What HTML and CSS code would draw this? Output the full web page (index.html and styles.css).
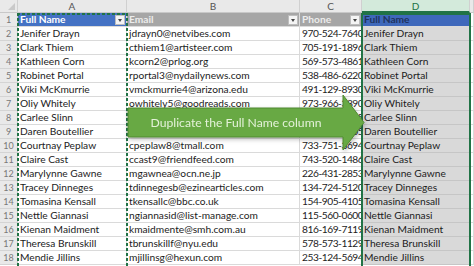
FILE: index.html
```html
<!DOCTYPE html>
<html lang="en">
<head>
    <meta charset="UTF-8">
    <title>Duplicate column</title>
    <link rel="stylesheet" href="styles.css">
</head>
<body>
    <div class="sheet-wrap">
        <div class="sheet">
            <!-- column headers -->
            <div class="col-head corner"></div>
            <div class="col-head">A</div>
            <div class="col-head">B</div>
            <div class="col-head">C</div>
            <div class="col-head active">D</div>
            <div class="col-head"></div>

            <!-- table header row -->
            <div class="row-num">1</div>
            <div class="cell th th-blue">Full Name<span class="filter"></span></div>
            <div class="cell th th-gray">Email<span class="filter"></span></div>
            <div class="cell th th-gray">Phone<span class="filter"></span></div>
            <div class="cell th th-sel">Full Name</div>
            <div class="cell"></div>

            <div class="row-num">2</div><div class="cell">Jenifer Drayn</div><div class="cell">jdrayn0@netvibes.com</div><div class="cell num">970-524-7640</div><div class="cell sel">Jenifer Drayn</div><div class="cell"></div>
            <div class="row-num">3</div><div class="cell">Clark Thiem</div><div class="cell">cthiem1@artisteer.com</div><div class="cell num">705-191-1896</div><div class="cell sel">Clark Thiem</div><div class="cell"></div>
            <div class="row-num">4</div><div class="cell">Kathleen Corn</div><div class="cell">kcorn2@prlog.org</div><div class="cell num">569-573-4861</div><div class="cell sel">Kathleen Corn</div><div class="cell"></div>
            <div class="row-num">5</div><div class="cell">Robinet Portal</div><div class="cell">rportal3@nydailynews.com</div><div class="cell num">538-486-6220</div><div class="cell sel">Robinet Portal</div><div class="cell"></div>
            <div class="row-num">6</div><div class="cell">Viki McKmurrie</div><div class="cell">vmckmurrie4@arizona.edu</div><div class="cell num">491-129-8930</div><div class="cell sel">Viki McKmurrie</div><div class="cell"></div>
            <div class="row-num">7</div><div class="cell">Oliy Whitely</div><div class="cell">owhitely5@goodreads.com</div><div class="cell num">973-966-3890</div><div class="cell sel">Oliy Whitely</div><div class="cell"></div>
            <div class="row-num">8</div><div class="cell">Carlee Slinn</div><div class="cell">cslinn6@ucsd.edu</div><div class="cell num">664-218-2315</div><div class="cell sel">Carlee Slinn</div><div class="cell"></div>
            <div class="row-num">9</div><div class="cell">Daren Boutellier</div><div class="cell">dboutellier7@google.com.au</div><div class="cell num">286-357-1505</div><div class="cell sel">Daren Boutellier</div><div class="cell"></div>
            <div class="row-num">10</div><div class="cell">Courtnay Peplaw</div><div class="cell">cpeplaw8@tmall.com</div><div class="cell num">733-751-3694</div><div class="cell sel">Courtnay Peplaw</div><div class="cell"></div>
            <div class="row-num">11</div><div class="cell">Claire Cast</div><div class="cell">ccast9@friendfeed.com</div><div class="cell num">743-520-1486</div><div class="cell sel">Claire Cast</div><div class="cell"></div>
            <div class="row-num">12</div><div class="cell">Marylynne Gawne</div><div class="cell">mgawnea@ocn.ne.jp</div><div class="cell num">226-431-2853</div><div class="cell sel">Marylynne Gawne</div><div class="cell"></div>
            <div class="row-num">13</div><div class="cell">Tracey Dinneges</div><div class="cell">tdinnegesb@ezinearticles.com</div><div class="cell num">134-724-5120</div><div class="cell sel">Tracey Dinneges</div><div class="cell"></div>
            <div class="row-num">14</div><div class="cell">Tomasina Kensall</div><div class="cell">tkensallc@bbc.co.uk</div><div class="cell num">154-905-4105</div><div class="cell sel">Tomasina Kensall</div><div class="cell"></div>
            <div class="row-num">15</div><div class="cell">Nettle Giannasi</div><div class="cell">ngiannasid@list-manage.com</div><div class="cell num">115-560-0600</div><div class="cell sel">Nettle Giannasi</div><div class="cell"></div>
            <div class="row-num">16</div><div class="cell">Kienan Maidment</div><div class="cell">kmaidmente@smh.com.au</div><div class="cell num">816-169-7119</div><div class="cell sel">Kienan Maidment</div><div class="cell"></div>
            <div class="row-num">17</div><div class="cell">Theresa Brunskill</div><div class="cell">tbrunskillf@nyu.edu</div><div class="cell num">578-573-1129</div><div class="cell sel">Theresa Brunskill</div><div class="cell"></div>
            <div class="row-num">18</div><div class="cell">Mendie Jillins</div><div class="cell">mjillinsg@hexun.com</div><div class="cell num">253-124-5694</div><div class="cell sel">Mendie Jillins</div><div class="cell"></div>
        </div>

        <!-- copy marquee around column A, selection around column D -->
        <div class="marquee"></div>
        <div class="selection"></div>

        <!-- callout arrow -->
        <svg class="arrow" viewBox="0 0 240 58" width="240" height="58">
            <polygon points="1,14 216,14 216,1 237,28.5 216,56 216,43 1,43" fill="#68a944" stroke="#4f8a30" stroke-width="1"></polygon>
            <text x="109" y="33" text-anchor="middle">Duplicate the Full Name column</text>
        </svg>
    </div>
</body>
</html>
```

FILE: styles.css
```css
/* General */
body {
    margin: 0;
    background: #fff;
    font-family: Lato, 'Open Sans', Arial, sans-serif;
    overflow: hidden;
}

.sheet-wrap {
    position: relative;
    width: 474px;
    height: 266px;
    overflow: hidden;
}

/* Grid of cells */
.sheet {
    display: grid;
    grid-template-columns: 18px 109px 173px 62px 108px 1fr;
    grid-template-rows: 13px;
    grid-auto-rows: 14px;
    font-size: 10.2px;
    color: #1c1c1c;
}

.col-head {
    background: #e9e9e9;
    color: #555;
    text-align: center;
    line-height: 12px;
    font-size: 10px;
    border-right: 1px solid #d0d0d0;
    border-bottom: 1px solid #c8c8c8;
}

.col-head.corner {
    position: relative;
}

.col-head.corner::after {
    content: "";
    position: absolute;
    right: 2px;
    bottom: 2px;
    border-left: 7px solid transparent;
    border-bottom: 7px solid #c9c9c9;
}

.col-head.active {
    background: #d3eadb;
    color: #217346;
    border-bottom: 2px solid #217346;
}

.row-num {
    background: #e9e9e9;
    color: #777;
    font-size: 9px;
    text-align: center;
    line-height: 13px;
    border-right: 1px solid #c8c8c8;
    border-bottom: 1px solid #d4d4d4;
}

.cell {
    border-right: 1px solid #dadada;
    border-bottom: 1px solid #dadada;
    padding-left: 2px;
    line-height: 13px;
    white-space: nowrap;
    overflow: hidden;
}

/* phone numbers: Lato digits run wider than the sheet's font */
.num {
    letter-spacing: -0.45px;
}

/* Table header row */
.th {
    position: relative;
    font-weight: 700;
}

.th-blue {
    background: #4472c4;
    color: #fff;
}

.th-gray {
    background: #a6a6a6;
    color: #ececec;
}

.th-sel {
    background: #3e68bb;
    color: #1f335e;
}

.filter {
    position: absolute;
    right: 1px;
    top: 2px;
    width: 8px;
    height: 8px;
    background: #f4f4f4;
    border: 1px solid #bdbdbd;
}

.filter::after {
    content: "";
    position: absolute;
    left: 2px;
    top: 3px;
    border-left: 2px solid transparent;
    border-right: 2px solid transparent;
    border-top: 3px solid #444;
}

/* Selected column D */
.sel {
    background: #d9d9d9;
    border-right-color: #c6c6c6;
    border-bottom-color: #c6c6c6;
}

/* marching ants, drawn as short dashes */
.marquee {
    position: absolute;
    left: 17px;
    top: 13px;
    width: 111px;
    height: 270px;
    background:
        repeating-linear-gradient(to bottom, #217346 0 3px, transparent 3px 5px) left top / 2px 100% no-repeat,
        repeating-linear-gradient(to bottom, #217346 0 3px, transparent 3px 5px) right top / 2px 100% no-repeat,
        repeating-linear-gradient(to right, #217346 0 3px, transparent 3px 5px) left top / 100% 2px no-repeat;
}

.selection {
    position: absolute;
    left: 361px;
    top: 13px;
    width: 106px;
    height: 270px;
    border: 2px solid #217346;
}

/* Callout arrow */
.arrow {
    position: absolute;
    left: 127px;
    top: 94px;
    filter: drop-shadow(1px 2px 2px rgba(0,0,0,0.25));
}

.arrow text {
    font-family: Lato, 'Open Sans', sans-serif;
    font-size: 12.2px;
    fill: #e3f1d8;
}
```
